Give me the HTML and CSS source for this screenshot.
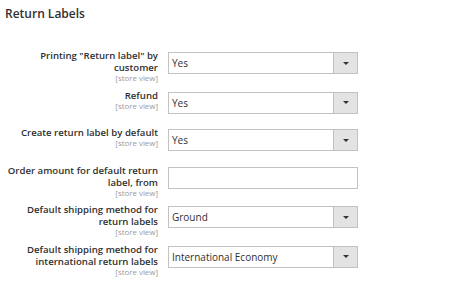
FILE: index.html
```html
<!DOCTYPE html>
<html>
<head>
<meta charset="utf-8">
<link rel="stylesheet" href="styles.css">
</head>
<body>
<div class="page">
  <h2 class="title">Return Labels</h2>
  <div class="form">
    <div class="row">
      <div class="label"><span class="name">Printing "Return label" by customer</span><span class="scope">[store view]</span></div>
      <div class="select"><span class="value">Yes</span><span class="btn"><span class="arrow"></span></span></div>
    </div>
    <div class="row">
      <div class="label"><span class="name">Refund</span><span class="scope">[store view]</span></div>
      <div class="select"><span class="value">Yes</span><span class="btn"><span class="arrow"></span></span></div>
    </div>
    <div class="row">
      <div class="label"><span class="name">Create return label by default</span><span class="scope">[store view]</span></div>
      <div class="select"><span class="value">Yes</span><span class="btn"><span class="arrow"></span></span></div>
    </div>
    <div class="row">
      <div class="label"><span class="name">Order amount for default return label, from</span><span class="scope">[store view]</span></div>
      <div class="input"></div>
    </div>
    <div class="row">
      <div class="label"><span class="name">Default shipping method for return labels</span><span class="scope">[store view]</span></div>
      <div class="select"><span class="value">Ground</span><span class="btn"><span class="arrow"></span></span></div>
    </div>
    <div class="row">
      <div class="label"><span class="name">Default shipping method for international return labels</span><span class="scope">[store view]</span></div>
      <div class="select"><span class="value">International Economy</span><span class="btn"><span class="arrow"></span></span></div>
    </div>
  </div>
</div>
</body>
</html>
```
FILE: styles.css
```css
* { box-sizing: border-box; }
html, body { margin: 0; padding: 0; background: #fff; }
body {
  font-family: "Open Sans", "Liberation Sans", sans-serif;
  color: #303030;
  width: 474px;
  height: 284px;
  overflow: hidden;
}
.page { padding: 6px 0 0 0; }
.title {
  margin: 0;
  padding-left: 5px;
  font-size: 12px;
  font-weight: 600;
  line-height: 16px;
  color: #303030;
}
.form { padding-top: 28px; }
.row {
  display: flex;
  align-items: flex-start;
  gap: 10px;
  min-height: 31.5px;
  margin-bottom: 6px;
}
.label {
  width: 158px;
  padding-left: 4px;
  text-align: right;
  display: flex;
  flex-direction: column;
  align-items: flex-end;
}
.name {
  font-size: 9.6px;
  font-weight: 600;
  line-height: 12px;
  color: #303030;
}
.scope {
  font-size: 7.9px;
  line-height: 9.5px;
  color: #9a9a9a;
}
.select, .input {
  margin-top: 2px;
  width: 190px;
  height: 22px;
  border: 1px solid #c2c2c2;
  background: #fff;
  display: flex;
  align-items: stretch;
}
.value {
  flex: 1;
  font-size: 10px;
  line-height: 20px;
  padding-left: 3px;
  color: #303030;
}
.btn {
  width: 24px;
  background: #e3e3e3;
  border-left: 1px solid #c2c2c2;
  display: flex;
  align-items: center;
  justify-content: center;
}
.arrow {
  width: 0;
  height: 0;
  border-left: 3px solid transparent;
  border-right: 3px solid transparent;
  border-top: 3px solid #333;
}
```
